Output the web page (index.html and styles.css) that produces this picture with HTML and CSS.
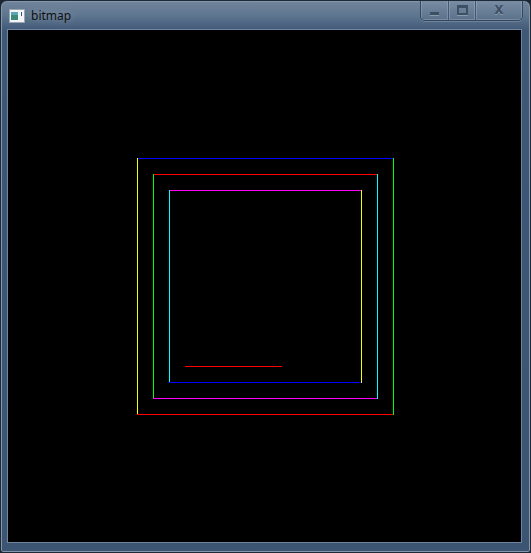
FILE: index.html
```html
<!DOCTYPE html>
<html>
<head>
<meta charset="utf-8">
<link rel="stylesheet" href="styles.css">
</head>
<body>
<div class="window">
  <div class="titlebar">
    <div class="app-icon">
      <svg width="16" height="14" viewBox="0 0 16 14">
        <rect x="0.5" y="0.5" width="15" height="13" fill="#f2f4f6" stroke="#9aa6b2"/>
        <rect x="2" y="3" width="7" height="8" fill="#3e8a7a"/>
        <rect x="2" y="3" width="7" height="3" fill="#5aa6b6"/>
        <rect x="12" y="3" width="1" height="4" fill="#2d5a8a"/>
      </svg>
    </div>
    <span class="title">bitmap</span>
    <div class="controls">
      <div class="btn min"><span class="min-glyph"></span></div>
      <div class="btn max"><span class="max-glyph"></span></div>
      <div class="btn close"><span class="close-glyph">X</span></div>
    </div>
  </div>
  <div class="client">
    <svg class="canvas" width="513" height="512" viewBox="0 0 513 512" shape-rendering="crispEdges">
      <line x1="129" y1="128.5" x2="386" y2="128.5" stroke="#0000ff"/>
      <line x1="129.5" y1="128" x2="129.5" y2="385" stroke="#ffff00"/>
      <line x1="129" y1="384.5" x2="386" y2="384.5" stroke="#ff0000"/>
      <line x1="385.5" y1="128" x2="385.5" y2="385" stroke="#00ff00"/>

      <line x1="145" y1="144.5" x2="370" y2="144.5" stroke="#ff0000"/>
      <line x1="145.5" y1="144" x2="145.5" y2="369" stroke="#00ff00"/>
      <line x1="145" y1="368.5" x2="370" y2="368.5" stroke="#ff00ff"/>
      <line x1="369.5" y1="144" x2="369.5" y2="369" stroke="#00ffff"/>

      <line x1="161" y1="160.5" x2="354" y2="160.5" stroke="#ff00ff"/>
      <line x1="161.5" y1="160" x2="161.5" y2="353" stroke="#00ffff"/>
      <line x1="161" y1="352.5" x2="354" y2="352.5" stroke="#0000ff"/>
      <line x1="353.5" y1="160" x2="353.5" y2="353" stroke="#ffff00"/>

      <line x1="177" y1="336.5" x2="274" y2="336.5" stroke="#ff0000"/>
    </svg>
  </div>
</div>
</body>
</html>
```

FILE: styles.css
```css
html, body {
  margin: 0;
  padding: 0;
  background: #1c2633;
}

.window {
  width: 531px;
  height: 553px;
  box-sizing: border-box;
  border: 1px solid #1f2a38;
  border-radius: 7px 7px 3px 3px;
  background: linear-gradient(to bottom, #71859b 0px, #5f7690 14px, #3f5876 30px, #3c5675 200px, #3b5573 553px);
  display: flex;
  flex-direction: column;
  overflow: hidden;
  position: relative;
  box-shadow: inset 0 0 0 1px #8396ab;
}

.titlebar {
  height: 29px;
  display: flex;
  align-items: flex-start;
  position: relative;
}

.app-icon {
  margin: 8px 0 0 8px;
  width: 16px;
  height: 14px;
}

.app-icon svg {
  display: block;
}

.title {
  margin: 8px 0 0 6px;
  font-family: "Noto Sans", "Liberation Sans", sans-serif;
  font-size: 12px;
  line-height: 14px;
  color: #101010;
  text-shadow: 0 0 8px rgba(255, 255, 255, 0.35);
}

.controls {
  position: absolute;
  top: -1px;
  right: 7px;
  display: flex;
  height: 20px;
  border: 1px solid #34465c;
  border-top: none;
  border-radius: 0 0 5px 5px;
  overflow: hidden;
  background: linear-gradient(to bottom, #7a8ea4, #5b718b);
  box-shadow: 0 1px 0 rgba(160, 180, 200, 0.35);
}

.btn {
  height: 20px;
  display: flex;
  align-items: center;
  justify-content: center;
  box-shadow: inset 0 0 0 1px rgba(170, 190, 210, 0.35);
}

.btn + .btn {
  border-left: 1px solid #44576e;
}

.min { width: 27px; }
.max { width: 26px; }
.close { width: 46px; }

.min-glyph {
  display: block;
  width: 9px;
  height: 3px;
  margin-top: 6px;
  background: #3d4f63;
  box-shadow: 0 1px 0 rgba(200, 210, 220, 0.4);
}

.max-glyph {
  display: block;
  width: 7px;
  height: 5px;
  border: 2px solid #3d4f63;
  border-top-width: 3px;
  box-shadow: 0 1px 0 rgba(200, 210, 220, 0.4);
}

.close-glyph {
  font-family: "DejaVu Sans", sans-serif;
  font-weight: bold;
  font-size: 12px;
  line-height: 12px;
  color: #3d4f63;
  text-shadow: 0 1px 0 rgba(200, 210, 220, 0.4);
}

.client {
  margin-left: 7px;
  width: 513px;
  height: 512px;
  background: #000;
  outline: 1px solid #6e86a1;
  position: relative;
}

.canvas {
  display: block;
}
```
